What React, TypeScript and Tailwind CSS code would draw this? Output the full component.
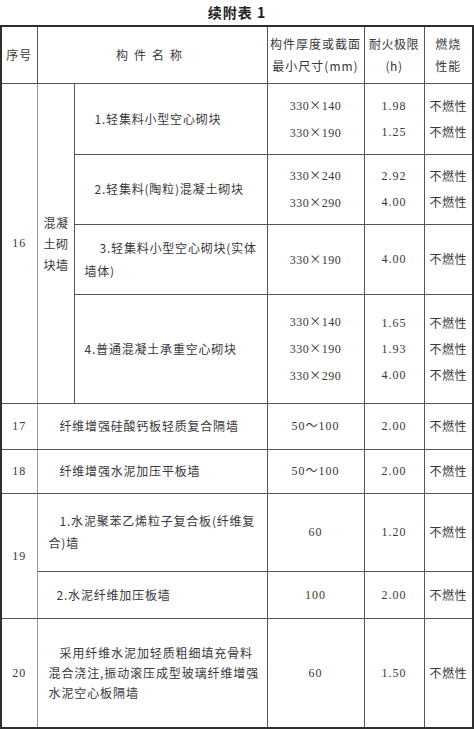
const cjk = "font-['Noto_Sans_CJK_SC',sans-serif]";
const num = "font-['Liberation_Serif','Noto_Sans_CJK_SC',serif] tracking-[1px]";
const cell = "border border-[#555] p-0 align-middle";
const noCell = "border border-[#555] border-r-[#9a9a9a] p-0 align-middle text-center";

function Lines({ items, className = "" }: { items: string[]; className?: string }) {
  return (
    <div className={`flex flex-col items-center leading-[26px] ${className}`}>
      {items.map((t, i) => {
        const parts = t.split("×");
        if (parts.length === 1) return <span key={i}>{t}</span>;
        return (
          <span key={i} className="tracking-[0.5px]">
            {parts[0]}
            <span className={cjk}>×</span>
            {parts[1]}
          </span>
        );
      })}
    </div>
  );
}

function Values({ size, limit, burn }: { size: string[]; limit: string[]; burn: string[] }) {
  return (
    <>
      <td className={cell}>
        <Lines items={size} className={num} />
      </td>
      <td className={cell}>
        <Lines items={limit} className={num} />
      </td>
      <td className={cell}>
        <Lines items={burn} className="tracking-[0.5px]" />
      </td>
    </>
  );
}

export default function App() {
  return (
    <div className={`min-h-screen w-[474px] bg-white text-[12px] text-[#383838] ${cjk}`}>
      <div className="flex h-[25px] items-center justify-center text-[14px] font-bold tracking-[1px] text-[#222]">
        续附表 1
      </div>

      <table className="w-[472px] table-fixed border-collapse border-2 border-[#2e2e2e]">
        <colgroup>
          <col className="w-[36px]" />
          <col className="w-[37px]" />
          <col className="w-[193px]" />
          <col className="w-[97px]" />
          <col className="w-[60px]" />
          <col className="w-[49px]" />
        </colgroup>
        <tbody>
          <tr className="h-[57px]">
            <td className={`${cell} text-center tracking-[1px]`}>序号</td>
            <td colSpan={2} className={`${cell} text-center tracking-[6px]`}>
              构件名称
            </td>
            <td className={`${cell} text-center leading-[22px] tracking-[1px]`}>
              构件厚度或截面
              <br />
              最小尺寸(mm)
            </td>
            <td className={`${cell} text-center leading-[22px] tracking-[0.5px]`}>
              耐火极限
              <br />
              (h)
            </td>
            <td className={`${cell} text-center leading-[22px] tracking-[1px]`}>
              燃烧
              <br />
              性能
            </td>
          </tr>

          {/* 16 混凝土砌块墙 */}
          <tr className="h-[71px]">
            <td rowSpan={4} className={`${noCell} ${num}`}>
              16
            </td>
            <td rowSpan={4} className={`${cell} pl-[6px] leading-[21px] tracking-[0.5px]`}>
              混凝
              <br />
              土砌
              <br />
              块墙
            </td>
            <td className={`${cell} pl-[10px] indent-[10px] tracking-[0.8px]`}>1.轻集料小型空心砌块</td>
            <Values size={["330×140", "330×190"]} limit={["1.98", "1.25"]} burn={["不燃性", "不燃性"]} />
          </tr>
          <tr className="h-[70px]">
            <td className={`${cell} pl-[10px] indent-[10px] tracking-[0.8px]`}>2.轻集料(陶粒)混凝土砌块</td>
            <Values size={["330×240", "330×290"]} limit={["2.92", "4.00"]} burn={["不燃性", "不燃性"]} />
          </tr>
          <tr className="h-[70px]">
            <td className={`${cell} pl-[10px] indent-[15px] leading-[23px] tracking-[0.8px]`}>
              3.轻集料小型空心砌块(实体
              <br />
              墙体)
            </td>
            <Values size={["330×190"]} limit={["4.00"]} burn={["不燃性"]} />
          </tr>
          <tr className="h-[109px]">
            <td className={`${cell} pl-[10px] tracking-[0.8px]`}>4.普通混凝土承重空心砌块</td>
            <Values
              size={["330×140", "330×190", "330×290"]}
              limit={["1.65", "1.93", "4.00"]}
              burn={["不燃性", "不燃性", "不燃性"]}
            />
          </tr>

          <tr className="h-[46px]">
            <td className={`${noCell} ${num}`}>17</td>
            <td colSpan={2} className={`${cell} pl-[11px] indent-[11px] tracking-[0.8px]`}>
              纤维增强硅酸钙板轻质复合隔墙
            </td>
            <Values size={["50～100"]} limit={["2.00"]} burn={["不燃性"]} />
          </tr>

          <tr className="h-[44px]">
            <td className={`${noCell} ${num}`}>18</td>
            <td colSpan={2} className={`${cell} pl-[11px] indent-[11px] tracking-[0.8px]`}>
              纤维增强水泥加压平板墙
            </td>
            <Values size={["50～100"]} limit={["2.00"]} burn={["不燃性"]} />
          </tr>

          <tr className="h-[78px]">
            <td rowSpan={2} className={`${noCell} ${num}`}>
              19
            </td>
            <td colSpan={2} className={`${cell} whitespace-nowrap pl-[11px] indent-[11px] leading-[22px] tracking-[0.8px]`}>
              1.水泥聚苯乙烯粒子复合板(纤维复
              <br />
              合)墙
            </td>
            <Values size={["60"]} limit={["1.20"]} burn={["不燃性"]} />
          </tr>
          <tr className="h-[47px]">
            <td colSpan={2} className={`${cell} pl-[11px] indent-[8px] tracking-[0.8px]`}>
              2.水泥纤维加压板墙
            </td>
            <Values size={["100"]} limit={["2.00"]} burn={["不燃性"]} />
          </tr>

          <tr className="h-[110px]">
            <td className={`${noCell} ${num}`}>20</td>
            <td colSpan={2} className={`${cell} whitespace-nowrap pl-[11px] indent-[11px] leading-[20px] tracking-[0.9px]`}>
              采用纤维水泥加轻质粗细填充骨料
              <br />
              混合浇注,振动滚压成型玻璃纤维增强
              <br />
              水泥空心板隔墙
            </td>
            <Values size={["60"]} limit={["1.50"]} burn={["不燃性"]} />
          </tr>
        </tbody>
      </table>
    </div>
  );
}
